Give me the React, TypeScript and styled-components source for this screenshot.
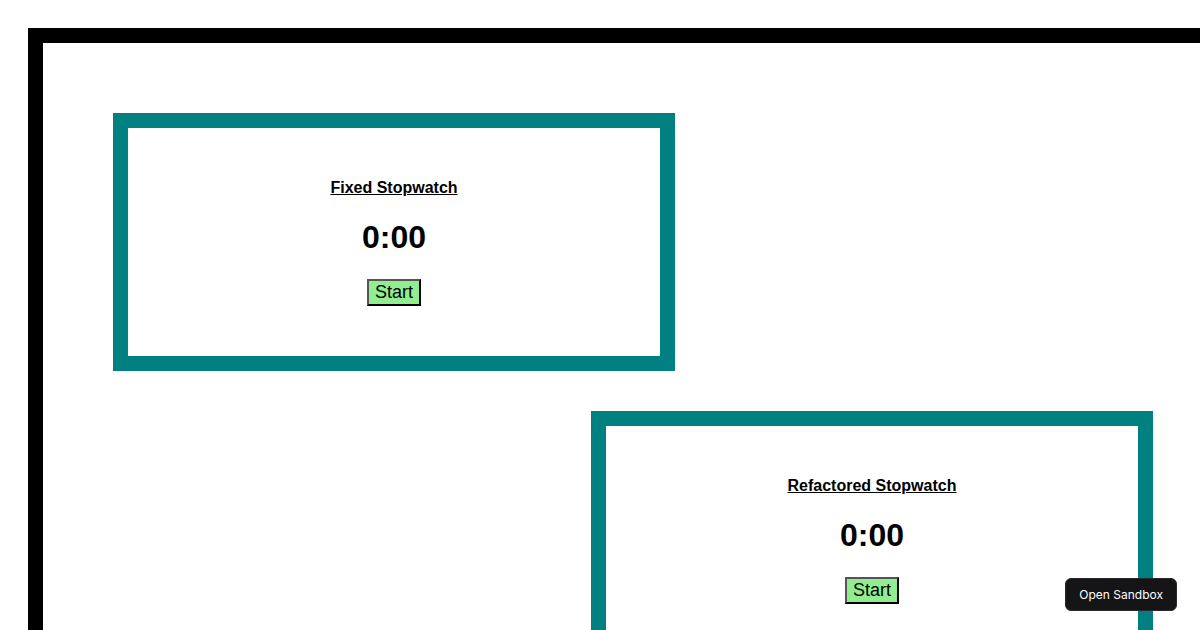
import styled, { createGlobalStyle } from 'styled-components';

const GlobalStyle = createGlobalStyle`
  html, body {
    overflow: hidden;
  }
  body {
    margin: 0;
    background: #ffffff;
    font-family: "Liberation Sans", Arial, sans-serif;
  }
`;

const Frame = styled.div`
  box-sizing: border-box;
  margin: 28px 0 0 28px;
  width: calc(100vw - 28px);
  height: calc(100vh - 28px);
  overflow: hidden;
  border-top: 15px solid #000000;
  border-left: 15px solid #000000;
  padding: 70px 0 0 70px;
  display: flex;
  flex-direction: column;
  gap: 40px;
`;

const Card = styled.div<{ $offset?: number }>`
  box-sizing: border-box;
  flex: none;
  width: 562px;
  height: 258px;
  margin-left: ${(p) => p.$offset ?? 0}px;
  border: 15px solid #008080;
  display: flex;
  flex-direction: column;
  align-items: center;
  justify-content: center;
`;

const Title = styled.h3`
  margin: 0;
  font-size: 16px;
  font-weight: bold;
  text-decoration: underline;
  line-height: 18px;
`;

const Time = styled.div`
  margin: 22px 0 23px;
  font-size: 32px;
  font-weight: bold;
  line-height: 37px;
`;

const StartButton = styled.button`
  font-family: "Liberation Sans", Arial, sans-serif;
  font-size: 18px;
  line-height: 21px;
  padding: 1px 6px;
  color: #000000;
  background: #90ee90;
  border: 2px outset #555555;
  cursor: pointer;
`;

const SandboxButton = styled.button`
  position: fixed;
  right: 23px;
  bottom: 19px;
  height: 33px;
  padding: 0 13px;
  border: 1px solid #2a2a2a;
  border-radius: 6px;
  background: #151517;
  color: #ffffff;
  font-family: Inter, "Noto Sans", sans-serif;
  font-size: 12px;
`;

function Stopwatch({ title, offset }: { title: string; offset?: number }) {
  return (
    <Card $offset={offset}>
      <Title>{title}</Title>
      <Time>0:00</Time>
      <StartButton>Start</StartButton>
    </Card>
  );
}

export default function App() {
  return (
    <>
      <GlobalStyle />
      <Frame>
        <Stopwatch title="Fixed Stopwatch" />
        <Stopwatch title="Refactored Stopwatch" offset={478} />
      </Frame>
      <SandboxButton>Open Sandbox</SandboxButton>
    </>
  );
}
